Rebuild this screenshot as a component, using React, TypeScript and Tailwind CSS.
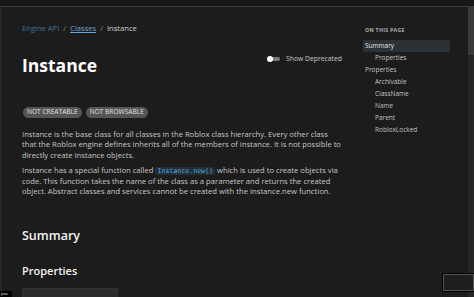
import { ReactNode } from 'react';

const tocItems: { label: string; indent?: boolean; active?: boolean }[] = [
    { label: 'Summary', active: true },
    { label: 'Properties', indent: true },
    { label: 'Properties' },
    { label: 'Archivable', indent: true },
    { label: 'ClassName', indent: true },
    { label: 'Name', indent: true },
    { label: 'Parent', indent: true },
    { label: 'RobloxLocked', indent: true },
];

const Badge = ({ children }: { children: ReactNode }) => (
    <span className="inline-flex items-center h-[11px] px-[4px] rounded-full bg-[#555555] text-[#e2e2e2] text-[6.6px] leading-none uppercase">
        {children}
    </span>
);

const App = () => {
    return (
        <div className="relative w-[474px] h-[297px] overflow-hidden bg-[#1c1c1c] font-['Open_Sans',_sans-serif] text-[#c6c6c6]">
            <div className="h-[7px] bg-[#171717] border-b border-[#3c3c3c]" />

            <div className="flex h-[290px] border-l-2 border-[#262626]">
                <main className="w-[321px] ml-[20px] pt-[15px]">
                    <nav className="h-[12px] leading-[12px] text-[7.6px] flex gap-[4px]">
                        <span className="text-[#3f7196]">Engine API</span>
                        <span className="text-[#8a8a8a]">/</span>
                        <span className="text-[#6aa6d2] underline">Classes</span>
                        <span className="text-[#8a8a8a]">/</span>
                        <span className="text-[#d0d0d0]">Instance</span>
                    </nav>

                    <div className="flex items-start justify-between mt-[20px]">
                        <h1 className="text-[17.5px] leading-[22px] font-bold text-white">Instance</h1>
                        <div className="flex items-center gap-[6px] mt-[1px] mr-[1px]">
                            <div className="relative w-[13px] h-[6px]">
                                <div className="absolute left-[3px] top-[1px] w-[10px] h-[4px] rounded-full bg-[#7a7a7a]" />
                                <div className="absolute left-0 top-0 w-[6px] h-[6px] rounded-full bg-white" />
                            </div>
                            <span className="text-[6.8px] leading-[8px] text-[#c8c8c8]">Show Deprecated</span>
                        </div>
                    </div>

                    <div className="flex gap-[4px] mt-[31px] ml-[1px]">
                        <Badge>Not Creatable</Badge>
                        <Badge>Not Browsable</Badge>
                    </div>

                    <p className="mt-[11px] text-[7.65px] leading-[10.4px] whitespace-nowrap">
                        Instance is the base class for all classes in the Roblox class hierarchy. Every other class
                        <br />
                        that the Roblox engine defines inherits all of the members of Instance. It is not possible to
                        <br />
                        directly create Instance objects.
                    </p>
                    <p className="mt-[5px] text-[7.65px] leading-[10.4px] whitespace-nowrap">
                        Instance has a special function called{' '}
                        <code className="leading-[8px] px-[2px] rounded-[2px] bg-[#22303b] text-[#5ea9dc] font-['DejaVu_Sans_Mono',_monospace] text-[6.6px]">
                            Instance.new()
                        </code>{' '}
                        which is used to create objects via
                        <br />
                        code. This function takes the name of the class as a parameter and returns the created
                        <br />
                        object. Abstract classes and services cannot be created with the Instance.new function.
                    </p>

                    <h2 className="mt-[32px] text-[12.5px] leading-[16px] font-semibold text-[#f2f2f2]">Summary</h2>
                    <h3 className="mt-[20px] text-[11px] leading-[14px] font-semibold text-[#f2f2f2]">Properties</h3>
                    <div className="mt-[10px] w-[96px] h-[12px] bg-[#2a2a2a] border border-[#333333]" />
                </main>

                <aside className="ml-[20px] w-[87px] pt-[19px]">
                    <div className="h-[8px] leading-[8px] pl-[2px] text-[5.2px] font-bold tracking-[0.3px] text-[#b0b0b0] uppercase">
                        On this page
                    </div>
                    <ul className="mt-[6px]">
                        {tocItems.map((item, i) => (
                            <li
                                key={i}
                                className={`h-[12px] leading-[12px] text-[6.5px] ${item.indent ? 'pl-[12px]' : 'pl-[2px]'} ${
                                    item.active ? 'bg-[#2c3135] text-[#e4e4e4]' : 'text-[#c2c2c2]'
                                }`}
                            >
                                {item.label}
                            </li>
                        ))}
                    </ul>
                </aside>

                <div className="ml-auto w-[6px] bg-[#262626]">
                    <div className="h-[48px] bg-[#3a3a3a]" />
                </div>
            </div>

            <div className="absolute right-0 top-[274px] w-[31px] h-[17px] border border-[#555555] bg-[#1e1e1e] shadow-[0_0_0_1px_#000]" />
            <div className="absolute left-0 bottom-0 w-[12px] h-[6px] bg-black text-[4px] leading-[6px] text-white pl-[1px]">
                pos
            </div>
        </div>
    );
};

export default App;
